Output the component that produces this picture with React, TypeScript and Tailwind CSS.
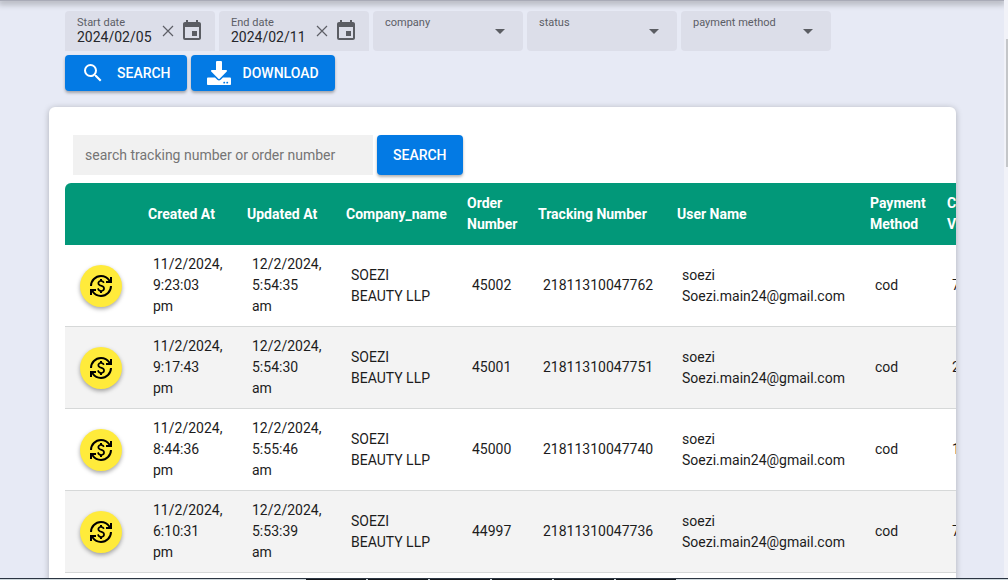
import { useState } from "react";
import { MdCurrencyExchange, MdEvent, MdSearch } from "react-icons/md";
import { FaDownload } from "react-icons/fa";

type Order = {
  created: [string, string, string];
  updated: [string, string, string];
  order: string;
  tracking: string;
  value: string;
};

const orders: Order[] = [
  { created: ["11/2/2024,", "9:23:03", "pm"], updated: ["12/2/2024,", "5:54:35", "am"], order: "45002", tracking: "21811310047762", value: "7" },
  { created: ["11/2/2024,", "9:17:43", "pm"], updated: ["12/2/2024,", "5:54:30", "am"], order: "45001", tracking: "21811310047751", value: "2" },
  { created: ["11/2/2024,", "8:44:36", "pm"], updated: ["12/2/2024,", "5:55:46", "am"], order: "45000", tracking: "21811310047740", value: "1" },
  { created: ["11/2/2024,", "6:10:31", "pm"], updated: ["12/2/2024,", "5:53:39", "am"], order: "44997", tracking: "21811310047736", value: "7" },
];

const headings = [
  "",
  "Created At",
  "Updated At",
  "Company_name",
  "Order Number",
  "Tracking Number",
  "User Name",
  "Payment Method",
  "Cod Value",
];

const buttonStyle =
  "flex items-center justify-center rounded-sm bg-[#037ae4] text-sm font-medium text-white shadow-[0_2px_3px_rgba(0,0,0,0.3)]";

const cell = "border-b border-[#d6d8d8] pl-[15px]";

function DateField({ id, label, initial }: { id: string; label: string; initial: string }) {
  const [value, setValue] = useState(initial);
  return (
    <div className="flex h-10 w-[150px] items-center rounded-t-sm bg-[#dcdee9] pl-3">
      <div className="flex w-[79px] flex-col">
        <label htmlFor={id} className="text-[11px] leading-3 text-[#5b5d66]">
          {label}
        </label>
        <input
          id={id}
          value={value}
          onChange={(e) => setValue(e.target.value)}
          className="h-4 w-full bg-transparent text-sm leading-4 text-[#25262b] outline-none"
        />
      </div>
      <button aria-label={`Clear ${label}`} onClick={() => setValue("")} className="flex w-6 justify-center">
        <svg viewBox="0 0 12 12" className="size-3" fill="none" stroke="#5d5f66" strokeWidth="1.2">
          <path d="M1 1 11 11M11 1 1 11" />
        </svg>
      </button>
      <button aria-label={`Open ${label} calendar`} className="text-[#5b5d63]">
        <MdEvent className="size-6" />
      </button>
    </div>
  );
}

function SelectField({ id, label }: { id: string; label: string }) {
  return (
    <div className="flex h-10 w-[150px] items-center rounded-sm bg-[#dcdee9] pr-[18px] pl-3">
      <div className="flex flex-1 flex-col">
        <label htmlFor={id} className="text-[11px] leading-3 text-[#5b5d66]">
          {label}
        </label>
        <select id={id} className="h-4 w-full appearance-none bg-transparent text-sm outline-none">
          <option value=""></option>
        </select>
      </div>
      <svg viewBox="0 0 10 5" className="h-[5px] w-2.5" fill="#5b5d63">
        <path d="M0 0h10L5 5z" />
      </svg>
    </div>
  );
}

export default function App() {
  return (
    <div className="flex h-screen flex-col overflow-hidden bg-[#e7eaf5] font-[Roboto,sans-serif] text-sm text-[#1c1c1c]">
      <div className="flex min-h-0 flex-1">
        <main className="min-w-0 flex-1 overflow-hidden">
          <div className="h-px bg-[#a9abb7] shadow-[0_1px_6px_2px_rgba(0,0,0,0.3)]" />
          <div className="pt-2.5 pr-12 pl-[49px]">
            <div className="flex flex-wrap gap-1 pl-4">
              <DateField id="start" label="Start date" initial="2024/02/05" />
              <DateField id="end" label="End date" initial="2024/02/11" />
              <SelectField id="company" label="company" />
              <SelectField id="status" label="status" />
              <SelectField id="payment" label="payment method" />
            </div>
            <div className="flex gap-1 pt-1 pl-4">
              <button className={`${buttonStyle} h-9 gap-3 px-4`}>
                <MdSearch className="size-6" />
                SEARCH
              </button>
              <button className={`${buttonStyle} h-9 gap-3 px-4`}>
                <FaDownload className="size-6" />
                DOWNLOAD
              </button>
            </div>
            <section className="mt-4 rounded-md bg-white pt-7 pl-4 shadow-[0_1px_6px_rgba(0,0,0,0.25)]">
              <div className="flex gap-1 pl-2">
                <input
                  aria-label="search tracking number or order number"
                  placeholder="search tracking number or order number"
                  className="h-10 w-[300px] bg-[#f1f1f1] px-3 text-sm outline-none placeholder:text-[#757575]"
                />
                <button className={`${buttonStyle} h-10 px-4`}>SEARCH</button>
              </div>
              <div className="mt-2 overflow-hidden rounded-tl-md">
                <table className="w-[970px] table-fixed border-separate border-spacing-0 text-left leading-[21px]">
                  <colgroup>
                    <col className="w-[73px]" />
                    <col className="w-[99px]" />
                    <col className="w-[99px]" />
                    <col className="w-[121px]" />
                    <col className="w-[71px]" />
                    <col className="w-[139px]" />
                    <col className="w-[193px]" />
                    <col className="w-[77px]" />
                    <col />
                  </colgroup>
                  <thead>
                    <tr className="bg-[#029879] text-white">
                      {headings.map((h) => (
                        <th key={h} className="px-2.5 py-2.5 font-bold">
                          {h === "Cod Value" ? <>Cod<br />Value</> : h}
                        </th>
                      ))}
                    </tr>
                  </thead>
                  <tbody>
                    {orders.map((o) => (
                      <tr key={o.order} className="h-[82px] even:bg-[#f3f3f3]">
                        <td className={cell}>
                          <button
                            aria-label={`Refund order ${o.order}`}
                            className="flex size-[42px] items-center justify-center rounded-full bg-[#ffeb3b] text-black shadow-[0_2px_4px_rgba(0,0,0,0.35)]"
                          >
                            <MdCurrencyExchange className="size-6" />
                          </button>
                        </td>
                        <td className={cell}>
                          {o.created[0]}<br />{o.created[1]}<br />{o.created[2]}
                        </td>
                        <td className={cell}>
                          {o.updated[0]}<br />{o.updated[1]}<br />{o.updated[2]}
                        </td>
                        <td className={cell}>SOEZI<br />BEAUTY LLP</td>
                        <td className={cell}>{o.order}</td>
                        <td className={cell}>{o.tracking}</td>
                        <td className={cell}>soezi<br />Soezi.main24@gmail.com</td>
                        <td className={cell}>cod</td>
                        <td className={cell}>{o.value}</td>
                      </tr>
                    ))}
                    <tr className="h-[82px]">
                      <td colSpan={9} />
                    </tr>
                  </tbody>
                </table>
              </div>
            </section>
          </div>
        </main>
        <div className="w-1 bg-[#f1f2f8] pt-[39px] pl-0.5">
          <div className="h-32 bg-[#c4c6c9]" />
        </div>
      </div>
      <div className="flex h-0.5 justify-center gap-0.5 border-t border-[#2b3542] bg-[#cfd8dc] pr-[26px]">
        {[0, 1, 2, 3, 4, 5].map((n) => (
          <span key={n} className="h-px w-[60px] bg-[#14181c]" />
        ))}
      </div>
    </div>
  );
}
